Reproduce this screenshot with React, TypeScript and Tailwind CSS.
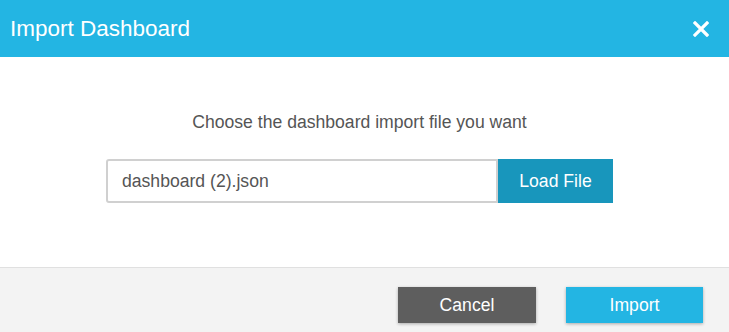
const App = () => {
  return (
    <div className="w-[729px] h-[332px] bg-white flex flex-col font-['Liberation_Sans',Arial,sans-serif]">
      <div className="h-[57px] bg-[#23b5e3] flex items-center justify-between pl-[10px] pr-[20px]">
        <span className="text-white text-[22.5px]">Import Dashboard</span>
        <svg width="16" height="16" viewBox="0 0 16 16" className="mt-[1px]">
          <path d="M2 2 L14 14 M14 2 L2 14" stroke="white" strokeWidth="3.2" strokeLinecap="square" />
        </svg>
      </div>
      <div className="h-[210px] flex flex-col items-center pr-[10px] pt-[53px]">
        <p className="text-[17.6px] leading-[24px] text-[#555]">Choose the dashboard import file you want</p>
        <div className="flex mt-[25px]">
          <div className="w-[392px] h-[44px] border-2 border-[#d0d0d0] rounded-l-[3px] flex items-center pl-[14px] text-[17.6px] text-[#555]">
            dashboard (2).json
          </div>
          <button className="w-[115px] h-[44px] bg-[#1896bc] text-white text-[17.6px]">Load File</button>
        </div>
      </div>
      <div className="flex-1 bg-[#f3f3f3] border-t border-[#e0e0e0] flex justify-end items-start pt-[19px] pr-[26px] gap-[30px]">
        <button className="w-[138px] h-[36px] bg-[#5e5e5e] text-white text-[17.6px] shadow-[0_1px_3px_rgba(0,0,0,0.3)]">Cancel</button>
        <button className="w-[137px] h-[36px] bg-[#23b5e3] text-white text-[17.6px] shadow-[0_1px_3px_rgba(0,0,0,0.3)]">Import</button>
      </div>
    </div>
  );
};

export default App;
